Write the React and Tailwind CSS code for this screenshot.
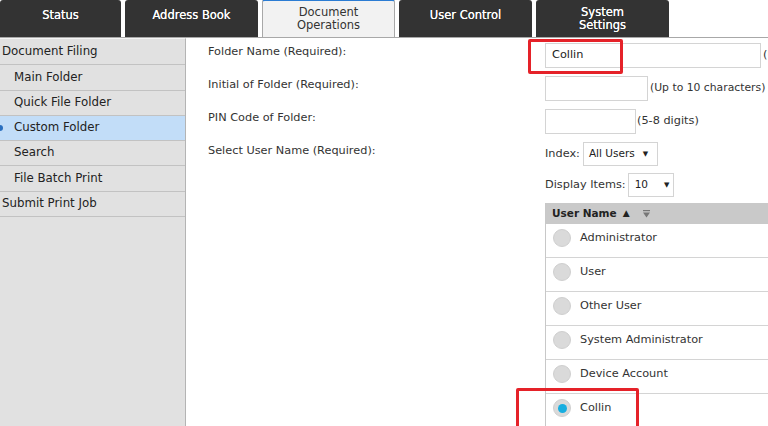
import React from 'react';

const tabs = [
  { label: 'Status', w: 'w-[121px]' },
  { label: 'Address Book', w: 'w-[133px]' },
  { label: ['Document', 'Operations'], w: 'w-[133px]', active: true },
  { label: 'User Control', w: 'w-[133px]' },
  { label: ['System', 'Settings'], w: 'w-[133px]' },
];

const sideItems = [
  { label: 'Document Filing', indent: false },
  { label: 'Main Folder', indent: true },
  { label: 'Quick File Folder', indent: true },
  { label: 'Custom Folder', indent: true, selected: true },
  { label: 'Search', indent: true },
  { label: 'File Batch Print', indent: true },
  { label: 'Submit Print Job', indent: false },
];

const users = ['Administrator', 'User', 'Other User', 'System Administrator', 'Device Account', 'Collin'];

const Tab = ({ tab }) => {
  if (tab.active) {
    return (
      <div className={`${tab.w} shrink-0 h-[38px] bg-[#f2f2f2] border-t-2 border-t-[#2b7cd3] border-x border-x-[#a8a8a8] rounded-t-[3px] flex flex-col items-center justify-center text-[#333] text-[11.5px] leading-[13px]`}>
        {tab.label.map((l) => (
          <span key={l}>{l}</span>
        ))}
      </div>
    );
  }
  return (
    <div className={`${tab.w} shrink-0 h-[37px] bg-[#333333] rounded-t-[3px] flex flex-col items-center justify-center text-white text-[11.5px] leading-[13px] [text-shadow:0_0_0.4px_#fff]`}>
      {Array.isArray(tab.label) ? tab.label.map((l) => <span key={l}>{l}</span>) : <span className="-mt-[7px]">{tab.label}</span>}
    </div>
  );
};

const FormRow = ({ label, children, className = '' }) => (
  <div className={`flex items-start ${className}`}>
    <div className="w-[337px] shrink-0 pt-[1px] leading-[15px]">{label}</div>
    <div className="flex-1 min-w-0">{children}</div>
  </div>
);

const App = () => {
  return (
    <div className="w-[768px] h-[426px] overflow-hidden bg-white relative text-[11.3px] text-[#333] font-['DejaVu_Sans',Verdana,sans-serif]">
      {/* tabs */}
      <div className="flex items-end h-[38px] gap-[4px] border-b border-[#a8a8a8]">
        {tabs.map((t, i) => (
          <Tab key={i} tab={t} />
        ))}
      </div>

      <div className="flex h-[388px]">
        {/* side menu */}
        <div className="w-[186px] shrink-0 bg-[#e1e1e1] border-r border-[#b4b4b4] pt-[1px] border-t border-t-[#f4f4f4] text-[11.8px]">
          {sideItems.map((it) => (
            <div
              key={it.label}
              className={`h-[25.3px] border-b border-[#c2c2c2] flex items-center text-[#222] whitespace-nowrap relative ${it.indent ? 'pl-[14px]' : 'pl-[2px]'} ${it.selected ? 'bg-[#c2ddf8]' : ''}`}
            >
              {it.selected && <span className="absolute left-[-3px] w-[6px] h-[6px] rounded-full bg-[#2a6fbf]" />}
              {it.label}
            </div>
          ))}
        </div>

        {/* main */}
        <div className="flex-1 min-w-0 overflow-hidden pl-[22px] pt-[5px] whitespace-nowrap">
          <FormRow label="Folder Name (Required):" className="h-[33px]">
            <div className="flex items-center h-[25px]">
              <div className="w-[216px] shrink-0 h-[25px] border border-[#d4d4d4] flex items-center pl-[6px] text-[#222]">Collin</div>
              <span className="ml-[2px]">(Up to 32 characters)</span>
            </div>
          </FormRow>
          <FormRow label="Initial of Folder (Required):" className="h-[33px]">
            <div className="flex items-center h-[25px]">
              <div className="w-[103px] shrink-0 h-[25px] border border-[#d4d4d4]" />
              <span className="ml-[2px] text-[10.8px]">(Up to 10 characters)</span>
            </div>
          </FormRow>
          <FormRow label="PIN Code of Folder:" className="h-[33px]">
            <div className="flex items-center h-[25px]">
              <div className="w-[91px] shrink-0 h-[25px] border border-[#d4d4d4]" />
              <span className="ml-[1px]">(5-8 digits)</span>
            </div>
          </FormRow>
          <FormRow label="Select User Name (Required):">
            <div className="flex items-center h-[24px]">
              <span>Index:</span>
              <div className="ml-[3px] w-[75px] shrink-0 h-[24px] border border-[#d4d4d4] flex items-center pl-[5px] text-[10.5px] text-[#222]">
                All Users
                <span className="ml-[8px] text-[7px]">▼</span>
              </div>
            </div>
            <div className="flex items-center h-[24px] mt-[7px]">
              <span>Display Items:</span>
              <div className="ml-[2px] w-[46px] shrink-0 h-[24px] border border-[#d4d4d4] flex items-center pl-[6px] text-[10.5px] text-[#222]">
                10
                <span className="ml-[16px] text-[7px]">▼</span>
              </div>
            </div>
            <div className="mt-[6px] border-l border-[#c8c8c8]">
              <div className="h-[21px] bg-[#c9c9c9] flex items-center pl-[6px] font-bold text-[10.5px] text-[#222]">
                User Name
                <span className="ml-[6px] text-[9px]">▲</span>
                <svg className="ml-[13px]" width="7" height="8" viewBox="0 0 7 8">
                  <rect x="0" y="0" width="7" height="1.2" fill="#777" />
                  <path d="M0 2.6 L7 2.6 L3.5 7.5 Z" fill="#777" />
                </svg>
              </div>
              {users.map((u, i) => (
                <div key={u} className="h-[34px] border-b border-[#d4d4d4] flex items-start pt-[5px] pl-[7px]">
                  <span className="w-[18px] h-[18px] shrink-0 rounded-full bg-[#dadada] border border-[#cfcfcf] flex items-center justify-center">
                    {i === users.length - 1 && <span className="w-[9px] h-[9px] rounded-full bg-[#18aee0]" />}
                  </span>
                  <span className="ml-[9px] text-[#333] leading-[18px]">{u}</span>
                </div>
              ))}
            </div>
          </FormRow>
        </div>
      </div>

      {/* highlight boxes */}
      <div className="absolute left-[528px] top-[39px] w-[95px] h-[35px] border-[3px] border-[#e52229] rounded-[2px]" />
      <div className="absolute left-[516px] top-[388px] w-[123px] h-[42px] border-[3px] border-[#e52229] rounded-[2px]" />
    </div>
  );
};

export default App;
